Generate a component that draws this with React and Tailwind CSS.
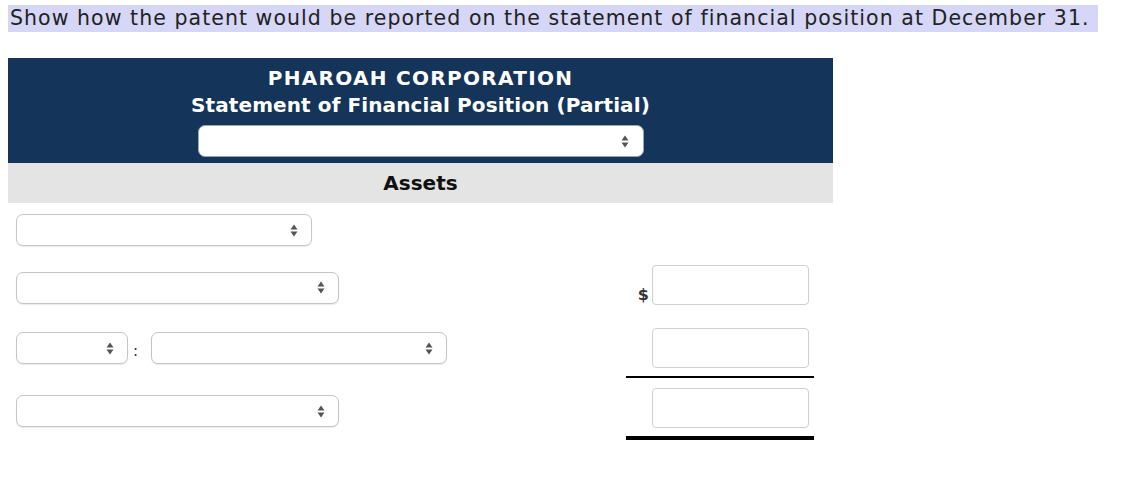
const font = { fontFamily: "Verdana, 'DejaVu Sans', sans-serif" };

const Arrows = () => (
  <svg width="8" height="13" viewBox="0 0 8 13" className="shrink-0">
    <path d="M4 0.5 L7.5 5.5 L0.5 5.5 Z" fill="#555" />
    <path d="M4 12.5 L7.5 7.5 L0.5 7.5 Z" fill="#555" />
  </svg>
);

const Select = ({ width }) => (
  <div
    className={`${width} h-[32px] flex items-center justify-end pr-[13px] bg-white border border-[#c4c4c4] rounded-[7px] shadow-[0_1px_1px_rgba(0,0,0,0.08)]`}
  >
    <Arrows />
  </div>
);

const Input = () => (
  <div className="w-[157px] h-[40px] bg-white border border-[#cfcfcf] rounded-[4px]" />
);

export default function App() {
  return (
    <div className="bg-white w-[1132px] h-[480px] pl-[8px] pt-[5px]" style={font}>
      <span className="inline-block h-[27px] leading-[27px] text-[20.5px] tracking-[1.05px] text-[#222] bg-[#d6d6f7] pl-[2px] pr-[8px]">
        Show how the patent would be reported on the statement of financial position at December 31.
      </span>

      <div className="w-[825px] mt-[26px]">
        <div className="bg-[#14345a] text-white font-bold text-center pt-[7px] pb-[6px] flex flex-col items-center">
          <div className="text-[20px] leading-[27px] tracking-[1.3px]">PHAROAH CORPORATION</div>
          <div className="text-[20px] leading-[27px] tracking-[0.1px]">Statement of Financial Position (Partial)</div>
          <div className="mt-[6px] w-[446px] h-[32px] flex items-center justify-end pr-[14px] bg-white rounded-[7px] border border-[#9aa5b5]">
            <Arrows />
          </div>
        </div>
        <div className="h-[40px] bg-[#e4e4e4] flex items-center justify-center font-bold text-[20px] text-[#111]">
          Assets
        </div>

        <div className="pl-[8px] pt-[11px]">
          <div className="flex items-center">
            <Select width="w-[296px]" />
          </div>

          <div className="flex items-start mt-[19px]">
            <div className="w-[610px] h-[40px] flex items-center pt-[5px]">
              <Select width="w-[323px]" />
            </div>
            <div className="w-[188px] flex">
              <span className="w-[26px] self-end text-right pr-[3px] text-[16px] font-bold text-[#333] leading-[20px]">$</span>
              <Input />
            </div>
          </div>

          <div className="flex items-start mt-[23px]">
            <div className="w-[610px] h-[40px] flex items-center">
              <Select width="w-[112px]" />
              <span className="w-[23px] h-[32px] flex items-end justify-start pl-[5px] pb-[2px] text-[15px] text-[#333]">:</span>
              <Select width="w-[296px]" />
            </div>
            <div className="w-[188px] flex flex-col">
              <div className="pl-[26px]">
                <Input />
              </div>
              <div className="mt-[8px] h-[2px] bg-black" />
            </div>
          </div>

          <div className="flex items-start mt-[10px]">
            <div className="w-[610px] h-[40px] flex items-center pt-[6px]">
              <Select width="w-[323px]" />
            </div>
            <div className="w-[188px] flex flex-col">
              <div className="pl-[26px]">
                <Input />
              </div>
              <div className="mt-[8px] h-[4px] bg-black" />
            </div>
          </div>
        </div>
      </div>
    </div>
  );
}
